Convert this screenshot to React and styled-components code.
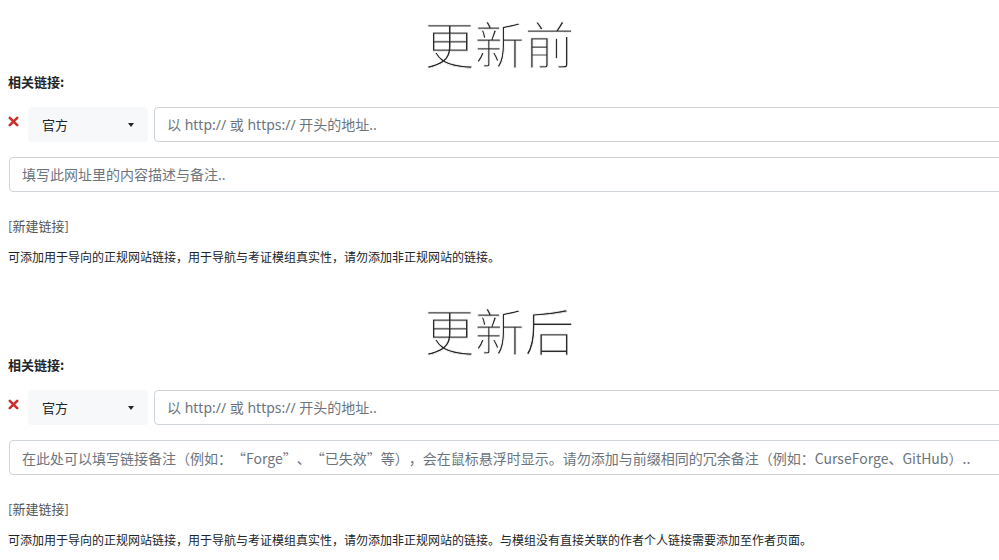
import React from 'react'
import styled, { createGlobalStyle } from 'styled-components'

const GlobalStyle = createGlobalStyle`
    html, body {
        margin: 0;
        padding: 0;
        background: #fff;
        overflow: hidden;
    }
    body {
        font-family: "Noto Sans", "Noto Sans CJK SC", sans-serif;
        color: #212529;
        text-spacing-trim: space-all;
    }
`

const Page = styled.div`
    width: 1040px;
    padding: 0 8px;
    box-sizing: border-box;
`

const Section = styled.section`
    margin-top: ${p => p.$top}px;
`

// no light CJK weight installed: a white stroke over the fill thins the glyphs
const Title = styled.h1`
    margin: ${p => p.$drop}px 0 ${p => -2 - p.$drop}px;
    width: 983px;
    text-align: center;
    font-family: "Noto Sans CJK SC", sans-serif;
    font-size: 50px;
    line-height: 60px;
    font-weight: 300;
    color: #2a2a2a;
    -webkit-text-stroke: 0.9px #fff;
    paint-order: normal;
`

const Label = styled.div`
    font-size: 13px;
    line-height: 20px;
    font-weight: 700;
    font-family: "Noto Sans CJK SC", sans-serif;
`

const Row = styled.div`
    display: flex;
    align-items: flex-start;
    margin-top: 15px;
`

const Remove = styled.span`
    width: 20px;
    height: 35px;
    display: flex;
    align-items: flex-start;
    padding-top: 9px;
    box-sizing: border-box;
    color: #c9302c;
`

const Select = styled.div`
    width: 120px;
    height: 35px;
    box-sizing: border-box;
    display: flex;
    align-items: center;
    justify-content: space-between;
    padding: 0 14px;
    background: #f7f8fa;
    border-radius: 4px;
    font-size: 13px;
    font-family: "Noto Sans CJK SC", sans-serif;
    color: #212529;
`

const Caret = styled.span`
    width: 0;
    height: 0;
    border-left: 3.5px solid transparent;
    border-right: 3.5px solid transparent;
    border-top: 4px solid #212529;
`

const Input = styled.input`
    flex: ${p => (p.$grow ? 1 : 'none')};
    width: ${p => (p.$grow ? 'auto' : '100%')};
    height: 35px;
    box-sizing: border-box;
    margin: ${p => (p.$grow ? '0 0 0 6px' : '15px 0 0 1px')};
    padding: 0 12px;
    border: 1px solid #ced4da;
    border-radius: 4px;
    font-family: ${p => (p.$cjk ? '"Noto Sans CJK SC"' : '"Noto Sans", "Noto Sans CJK SC"')}, sans-serif;
    font-size: 14px;
    color: #495057;
    outline: none;
    text-spacing-trim: space-all;
    &::placeholder {
        color: #6c757d;
    }
`

const NewLink = styled.div`
    margin-top: 24px;
    font-size: 13px;
    line-height: 20px;
    color: #555;
    font-family: "Noto Sans CJK SC", sans-serif;
`

const Note = styled.p`
    margin: 12px 0 0;
    font-size: 12px;
    line-height: 18px;
    color: #212529;
    font-family: "Noto Sans CJK SC", sans-serif;
`

const Cross = () => (
    <svg width="11" height="11" viewBox="0 0 11 11">
        <path d="M1.8 1.8 L9.2 9.2 M9.2 1.8 L1.8 9.2" stroke="currentColor" strokeWidth="2.6" strokeLinecap="round" />
    </svg>
)

const LinkEditor = ({ title, top, drop, descHint, cjkHint, note }) => (
    <Section $top={top}>
        <Title $drop={drop}>{title}</Title>
        <Label>相关链接:</Label>
        <Row>
            <Remove><Cross /></Remove>
            <Select>
                <span>官方</span>
                <Caret />
            </Select>
            <Input $grow placeholder="以 http:// 或 https:// 开头的地址.." />
        </Row>
        <Input $cjk={cjkHint} placeholder={descHint} />
        <NewLink>[新建链接]</NewLink>
        <Note>{note}</Note>
    </Section>
)

const baseNote = '可添加用于导向的正规网站链接，用于导航与考证模组真实性，请勿添加非正规网站的链接。'

export default function App() {
    return (
        <Page>
            <GlobalStyle />
            <LinkEditor
                title="更新前"
                top={14}
                drop={-2}
                descHint="填写此网址里的内容描述与备注.."
                note={baseNote}
            />
            <LinkEditor
                title="更新后"
                top={33}
                drop={2}
                cjkHint
                descHint="在此处可以填写链接备注（例如：“Forge”、“已失效”等），会在鼠标悬浮时显示。请勿添加与前缀相同的冗余备注（例如：CurseForge、GitHub）.."
                note={baseNote + '与模组没有直接关联的作者个人链接需要添加至作者页面。'}
            />
        </Page>
    )
}
